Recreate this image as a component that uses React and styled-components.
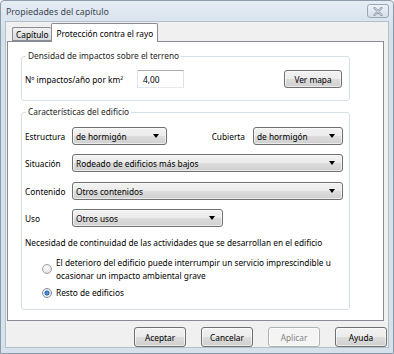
import React from 'react';
import styled, { createGlobalStyle } from 'styled-components';

const GlobalStyle = createGlobalStyle`
  html, body { margin:0; padding:0; background:#fff; }
  body {
    font-family: "Noto Sans", "Open Sans", sans-serif;
    font-size: 8.3px;
    color: #000;
  }
  * { box-sizing: border-box; }
`;

const Window = styled.div`
  width: 394px;
  height: 354px;
  border: 1px solid #8d9aa8;
  border-radius: 4px 4px 0 0;
  background: linear-gradient(#e4ecf4, #d5e0eb 30px, #d7e1eb);
  display: flex;
  flex-direction: column;
`;

const TitleBar = styled.div`
  height: 20px;
  display: flex;
  align-items: center;
  justify-content: space-between;
  padding: 0 4px 0 5px;
`;

const Title = styled.span`
  font-size: 8.9px;
  color: #3d4650;
`;

const CloseButton = styled.div`
  width: 22px;
  height: 14px;
  border: 1px solid #9aa7b5;
  border-radius: 3px;
  background: linear-gradient(#eef3f8, #d5dee8);
  display: flex;
  align-items: center;
  justify-content: center;
`;

const Client = styled.div`
  flex: 1;
  margin: 0 4px 5px 4px;
  background: #f0f0f0;
  border: 1px solid #b4c0cc;
  display: flex;
  flex-direction: column;
  padding: 0 4px 0 1px;
`;

const TabStrip = styled.div`
  display: flex;
  align-items: flex-end;
  height: 19px;
  padding-left: 5px;
  position: relative;
  z-index: 1;
`;

const Tab = styled.div`
  height: ${({ active }) => (active ? '19px' : '14px')};
  padding: 0 ${({ active }) => (active ? '4px' : '3px')};
  display: flex;
  align-items: center;
  border: 1px solid #898c95;
  border-bottom: ${({ active }) => (active ? 'none' : '1px solid #898c95')};
  border-right: ${({ active }) => (active ? '1px solid #898c95' : 'none')};
  border-radius: 2px 2px 0 0;
  background: ${({ active }) => (active ? '#fff' : 'linear-gradient(#f3f3f3, #e3e3e3 50%, #d9d9d9)')};
  margin-bottom: ${({ active }) => (active ? '-1px' : '0')};
  white-space: nowrap;
`;

const Panel = styled.div`
  height: 280px;
  background: #fff;
  border: 1px solid #898c95;
  display: flex;
  flex-direction: column;
  padding: 8px 33px 0 13px;
`;

const Group = styled.fieldset`
  margin: 0;
  padding: ${({ pad }) => pad};
  border: 1px solid #d5dfe5;
  border-radius: 3px;
  min-width: 0;
  height: ${({ h }) => h};
  & + & { margin-top: 5px; }
`;

const Legend = styled.legend`
  padding: 0 2px;
  margin-left: 1px;
  line-height: 12px;
  color: #1e1e1e;
`;

const Row = styled.div`
  display: flex;
  align-items: center;
  height: 18px;
  margin-bottom: ${({ mb }) => mb || '0'};
`;

const Label = styled.span`
  width: ${({ w }) => w || 'auto'};
  margin-right: ${({ mr }) => mr || '0'};
  flex: none;
  white-space: nowrap;
`;

const TextBox = styled.div`
  width: 47px;
  height: 18px;
  border: 1px solid #abadb3;
  border-color: #abadb3 #dbdfe6 #e3e9ef #e2e3ea;
  display: flex;
  align-items: center;
  padding-left: 5px;
  background: #fff;
`;

const Spacer = styled.div`
  flex: 1;
`;

const Button = styled.div`
  width: ${({ w }) => w || '52px'};
  height: ${({ h }) => h || '20px'};
  border: 1px solid ${({ disabled }) => (disabled ? '#adb2b5' : '#707070')};
  border-radius: 3px;
  background: ${({ disabled }) =>
    disabled ? '#f4f4f4' : 'linear-gradient(#f2f2f2, #ebebeb 50%, #dddddd 51%, #cfcfcf)'};
  color: ${({ disabled }) => (disabled ? '#838383' : '#000')};
  display: flex;
  align-items: center;
  justify-content: center;
  box-shadow: inset 0 0 0 1px rgba(255,255,255,0.6);
`;

const Select = styled.div`
  width: ${({ w }) => w};
  height: 18px;
  border: 1px solid #707070;
  border-radius: 3px;
  background: linear-gradient(#f2f2f2, #ebebeb 50%, #dddddd 51%, #cfcfcf);
  display: flex;
  align-items: center;
  justify-content: space-between;
  padding: 0 7px 0 3px;
  box-shadow: inset 0 0 0 1px rgba(255,255,255,0.6);
  white-space: nowrap;
`;

const Arrow = styled.span`
  width: 0;
  height: 0;
  border-left: 3px solid transparent;
  border-right: 3px solid transparent;
  border-top: 4px solid #000;
`;

const Text = styled.div`
  margin: ${({ m }) => m || '0'};
  line-height: ${({ lh }) => lh || '12px'};
  white-space: nowrap;
`;

const RadioRow = styled.div`
  display: flex;
  align-items: center;
  gap: 4px;
  padding-left: 17px;
  margin-top: ${({ mt }) => mt || '0'};
  line-height: 12px;
`;

const Radio = styled.span`
  width: 10px;
  height: 10px;
  flex: none;
  border-radius: 50%;
  border: 1px solid ${({ checked }) => (checked ? '#7f8ea0' : '#a0a0a0')};
  background: ${({ checked }) =>
    checked
      ? 'radial-gradient(circle, #5d9ce0 0, #2f6ab8 2.2px, #e6eaee 2.8px, #f4f4f4 100%)'
      : 'radial-gradient(circle at 40% 35%, #fdfdfd, #d9d9d9)'};
`;

const Footer = styled.div`
  display: flex;
  justify-content: flex-end;
  gap: 15px;
  margin: 6px -3px 0 0;
`;

const Combo = ({ w, children }) => (
  <Select w={w}>
    <span>{children}</span>
    <Arrow />
  </Select>
);

export default function App() {
  return (
    <>
      <GlobalStyle />
      <Window>
        <TitleBar>
          <Title>Propiedades del capítulo</Title>
          <CloseButton>
            <svg width="10" height="9" viewBox="0 0 10 9">
              <path d="M1.5 1 L8.5 8 M8.5 1 L1.5 8" stroke="#8593a3" strokeWidth="2.2" strokeLinecap="round" />
              <path d="M1.5 1 L8.5 8 M8.5 1 L1.5 8" stroke="#f4f7fa" strokeWidth="0.9" strokeLinecap="round" />
            </svg>
          </CloseButton>
        </TitleBar>
        <Client>
          <TabStrip>
            <Tab>Capítulo</Tab>
            <Tab active>Protección contra el rayo</Tab>
          </TabStrip>
          <Panel>
            <Group pad="8px 7px 0 3px" h="51px">
              <Legend>Densidad de impactos sobre el terreno</Legend>
              <Row>
                <Label w="112px">Nº impactos/año por km²</Label>
                <TextBox>4,00</TextBox>
                <Spacer />
                <Button w="58px" h="18px">Ver mapa</Button>
              </Row>
            </Group>
            <Group pad="9px 6px 0 3px" h="204px">
              <Legend>Características del edificio</Legend>
              <Row mb="9px">
                <Label w="47px">Estructura</Label>
                <Combo w="95px">de hormigón</Combo>
                <Spacer />
                <Label mr="8px">Cubierta</Label>
                <Combo w="90px">de hormigón</Combo>
              </Row>
              <Row mb="10px">
                <Label w="47px">Situación</Label>
                <Combo w="271px">Rodeado de edificios más bajos</Combo>
              </Row>
              <Row mb="9px">
                <Label w="47px">Contenido</Label>
                <Combo w="271px">Otros contenidos</Combo>
              </Row>
              <Row>
                <Label w="47px">Uso</Label>
                <Combo w="151px">Otros usos</Combo>
              </Row>
              <Text m="10px 0 0 0">Necesidad de continuidad de las actividades que se desarrollan en el edificio</Text>
              <RadioRow mt="7px">
                <Radio />
                <Text lh="13px">
                  El deterioro del edificio puede interrumpir un servicio imprescindible u
                  <br />
                  ocasionar un impacto ambiental grave
                </Text>
              </RadioRow>
              <RadioRow mt="5px">
                <Radio checked />
                <span>Resto de edificios</span>
              </RadioRow>
            </Group>
          </Panel>
          <Footer>
            <Button>Aceptar</Button>
            <Button>Cancelar</Button>
            <Button disabled>Aplicar</Button>
            <Button>Ayuda</Button>
          </Footer>
        </Client>
      </Window>
    </>
  );
}
